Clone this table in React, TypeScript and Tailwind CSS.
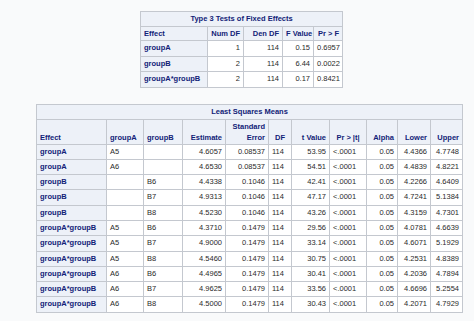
import React from "react";

const head = "border border-[#c4c8cf] bg-[#edf1f8] text-[#112277] font-bold align-bottom px-[3px] whitespace-nowrap";
const rowHead = "border border-[#c4c8cf] bg-[#edf1f8] text-[#112277] font-bold text-left px-[3px] whitespace-nowrap";
const cell = "border border-[#c4c8cf] bg-white text-[#2a2a2a] px-[3px] whitespace-nowrap";

const fixed = [
  ["groupA", "1", "114", "0.15", "0.6957"],
  ["groupB", "2", "114", "6.44", "0.0022"],
  ["groupA*groupB", "2", "114", "0.17", "0.8421"],
];

const lsm = [
  ["groupA", "A5", "", "4.6057", "0.08537", "53.95", "4.4366", "4.7748"],
  ["groupA", "A6", "", "4.6530", "0.08537", "54.51", "4.4839", "4.8221"],
  ["groupB", "", "B6", "4.4338", "0.1046", "42.41", "4.2266", "4.6409"],
  ["groupB", "", "B7", "4.9313", "0.1046", "47.17", "4.7241", "5.1384"],
  ["groupB", "", "B8", "4.5230", "0.1046", "43.26", "4.3159", "4.7301"],
  ["groupA*groupB", "A5", "B6", "4.3710", "0.1479", "29.56", "4.0781", "4.6639"],
  ["groupA*groupB", "A5", "B7", "4.9000", "0.1479", "33.14", "4.6071", "5.1929"],
  ["groupA*groupB", "A5", "B8", "4.5460", "0.1479", "30.75", "4.2531", "4.8389"],
  ["groupA*groupB", "A6", "B6", "4.4965", "0.1479", "30.41", "4.2036", "4.7894"],
  ["groupA*groupB", "A6", "B7", "4.9625", "0.1479", "33.56", "4.6696", "5.2554"],
  ["groupA*groupB", "A6", "B8", "4.5000", "0.1479", "30.43", "4.2071", "4.7929"],
];

function FixedEffects() {
  return (
    <table className="ml-[140px] mt-[11px] border-collapse table-fixed w-[202px]">
      <colgroup>
        <col className="w-[67px]" />
        <col className="w-[36px]" />
        <col className="w-[39px]" />
        <col className="w-[31px]" />
        <col className="w-[29px]" />
      </colgroup>
      <thead>
        <tr>
          <th colSpan={5} className={head + " text-center leading-[14px]"}>
            Type 3 Tests of Fixed Effects
          </th>
        </tr>
        <tr className="leading-[13px]">
          <th className={head + " text-left"}>Effect</th>
          <th className={head + " text-right"}>Num DF</th>
          <th className={head + " text-right"}>Den DF</th>
          <th className={head + " text-right"}>F Value</th>
          <th className={head + " text-right"}>Pr &gt; F</th>
        </tr>
      </thead>
      <tbody>
        {fixed.map((r) => (
          <tr key={r[0]} className="leading-[14.5px]">
            <th className={rowHead}>{r[0]}</th>
            <td className={cell + " text-right"}>{r[1]}</td>
            <td className={cell + " text-right"}>{r[2]}</td>
            <td className={cell + " text-right"}>{r[3]}</td>
            <td className={cell + " text-right"}>{r[4]}</td>
          </tr>
        ))}
      </tbody>
    </table>
  );
}

function LeastSquares() {
  return (
    <table className="ml-[36px] mt-[16px] border-collapse table-fixed w-[426px]">
      <colgroup>
        <col className="w-[70px]" />
        <col className="w-[37px]" />
        <col className="w-[39px]" />
        <col className="w-[43px]" />
        <col className="w-[43px]" />
        <col className="w-[23px]" />
        <col className="w-[38px]" />
        <col className="w-[37px]" />
        <col className="w-[31px]" />
        <col className="w-[33px]" />
        <col className="w-[32px]" />
      </colgroup>
      <thead>
        <tr>
          <th colSpan={11} className={head + " text-center leading-[14px]"}>
            Least Squares Means
          </th>
        </tr>
        <tr className="leading-[12px]">
          <th className={head + " text-left"}>Effect</th>
          <th className={head + " text-left"}>groupA</th>
          <th className={head + " text-left"}>groupB</th>
          <th className={head + " text-right"}>Estimate</th>
          <th className={head + " text-right !leading-[10px] pt-[2px]"}>
            Standard
            <br />
            <span className="leading-[12px] inline-block">Error</span>
          </th>
          <th className={head + " text-center"}>DF</th>
          <th className={head + " text-right"}>t Value</th>
          <th className={head + " text-center"}>Pr &gt; |t|</th>
          <th className={head + " text-right"}>Alpha</th>
          <th className={head + " text-right"}>Lower</th>
          <th className={head + " text-right"}>Upper</th>
        </tr>
      </thead>
      <tbody>
        {lsm.map((r, i) => (
          <tr key={i} className="leading-[14.3px]">
            <th className={rowHead}>{r[0]}</th>
            <td className={cell + " text-left"}>{r[1]}</td>
            <td className={cell + " text-left"}>{r[2]}</td>
            <td className={cell + " text-right"}>{r[3]}</td>
            <td className={cell + " text-right"}>{r[4]}</td>
            <td className={cell + " text-left"}>114</td>
            <td className={cell + " text-right"}>{r[5]}</td>
            <td className={cell + " text-left"}>&lt;.0001</td>
            <td className={cell + " text-right"}>0.05</td>
            <td className={cell + " text-right"}>{r[6]}</td>
            <td className={cell + " text-right"}>{r[7]}</td>
          </tr>
        ))}
      </tbody>
    </table>
  );
}

export default function App() {
  return (
    <div className="w-[474px] h-[321px] overflow-hidden bg-[#f9fafb] text-[7.5px] font-['Liberation_Sans',Arial,sans-serif]">
      <FixedEffects />
      <LeastSquares />
    </div>
  );
}
